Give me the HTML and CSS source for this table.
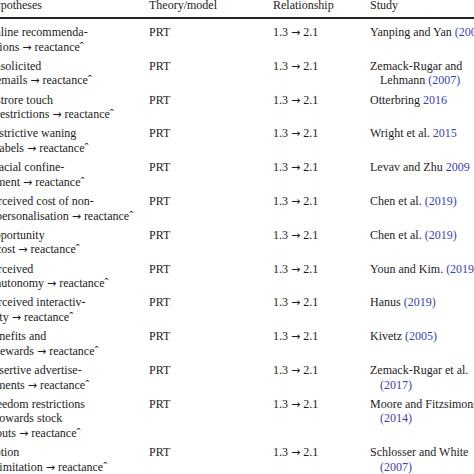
FILE: index.html
```html
<!DOCTYPE html>
<html lang="en">
<head>
<meta charset="utf-8">
<title>Hypotheses table</title>
<link rel="stylesheet" href="styles.css">
</head>
<body>
<div class="frame">
<table class="tbl">
<colgroup>
<col class="c1"><col class="c2"><col class="c3"><col class="c4">
</colgroup>
<thead>
<tr><th>Hypotheses</th><th>Theory/model</th><th>Relationship</th><th>Study</th></tr>
</thead>
<tbody>
<tr><td><span class="ln">Online recommenda-</span><span class="ln">tions <span class="ar">→</span> reactanceˆ</span></td><td>PRT</td><td>1.3 <span class="ar">→</span> 2.1</td><td><span class="ln">Yanping and Yan <span class="ref">(2009)</span></span></td></tr>
<tr><td><span class="ln">Unsolicited</span><span class="ln">emails <span class="ar">→</span> reactanceˆ</span></td><td>PRT</td><td>1.3 <span class="ar">→</span> 2.1</td><td><span class="ln">Zemack-Rugar and</span><span class="ln">Lehmann <span class="ref">(2007)</span></span></td></tr>
<tr><td><span class="ln">Instrore touch</span><span class="ln">restrictions <span class="ar">→</span> reactanceˆ</span></td><td>PRT</td><td>1.3 <span class="ar">→</span> 2.1</td><td><span class="ln">Otterbring <span class="ref">2016</span></span></td></tr>
<tr><td><span class="ln">Restrictive waning</span><span class="ln">labels <span class="ar">→</span> reactanceˆ</span></td><td>PRT</td><td>1.3 <span class="ar">→</span> 2.1</td><td><span class="ln">Wright et al. <span class="ref">2015</span></span></td></tr>
<tr><td><span class="ln">Spacial confine-</span><span class="ln">ment <span class="ar">→</span> reactanceˆ</span></td><td>PRT</td><td>1.3 <span class="ar">→</span> 2.1</td><td><span class="ln">Levav and Zhu <span class="ref">2009</span></span></td></tr>
<tr><td><span class="ln">Perceived cost of non-</span><span class="ln">personalisation <span class="ar">→</span> reactanceˆ</span></td><td>PRT</td><td>1.3 <span class="ar">→</span> 2.1</td><td><span class="ln">Chen et al. <span class="ref">(2019)</span></span></td></tr>
<tr><td><span class="ln">Opportunity</span><span class="ln">cost <span class="ar">→</span> reactanceˆ</span></td><td>PRT</td><td>1.3 <span class="ar">→</span> 2.1</td><td><span class="ln">Chen et al. <span class="ref">(2019)</span></span></td></tr>
<tr><td><span class="ln">Perceived</span><span class="ln">autonomy <span class="ar">→</span> reactanceˆ</span></td><td>PRT</td><td>1.3 <span class="ar">→</span> 2.1</td><td><span class="ln">Youn and Kim. <span class="ref">(2019)</span></span></td></tr>
<tr><td><span class="ln">Perceived interactiv-</span><span class="ln">ity <span class="ar">→</span> reactanceˆ</span></td><td>PRT</td><td>1.3 <span class="ar">→</span> 2.1</td><td><span class="ln">Hanus <span class="ref">(2019)</span></span></td></tr>
<tr><td><span class="ln">Benefits and</span><span class="ln">rewards <span class="ar">→</span> reactanceˆ</span></td><td>PRT</td><td>1.3 <span class="ar">→</span> 2.1</td><td><span class="ln">Kivetz <span class="ref">(2005)</span></span></td></tr>
<tr><td><span class="ln">Assertive advertise-</span><span class="ln">ments <span class="ar">→</span> reactanceˆ</span></td><td>PRT</td><td>1.3 <span class="ar">→</span> 2.1</td><td><span class="ln">Zemack-Rugar et al.</span><span class="ln"><span class="ref">(2017)</span></span></td></tr>
<tr><td><span class="ln">Freedom restrictions</span><span class="ln">towards stock</span><span class="ln">outs <span class="ar">→</span> reactanceˆ</span></td><td>PRT</td><td>1.3 <span class="ar">→</span> 2.1</td><td><span class="ln">Moore and Fitzsimons</span><span class="ln"><span class="ref">(2014)</span></span></td></tr>
<tr><td><span class="ln">Option</span><span class="ln">limitation <span class="ar">→</span> reactanceˆ</span></td><td>PRT</td><td>1.3 <span class="ar">→</span> 2.1</td><td><span class="ln">Schlosser and White</span><span class="ln"><span class="ref">(2007)</span></span></td></tr>
</tbody>
</table>
</div>
</body>
</html>
```

FILE: styles.css
```css
html, body {
  margin: 0;
  padding: 0;
  background: #ffffff;
}

.frame {
  width: 474px;
  height: 474px;
  overflow: hidden;
}

.tbl {
  border-collapse: separate;
  border-spacing: 0;
  table-layout: fixed;
  width: 544px;
  margin-top: -2.5px;
  margin-left: -14px;
  font-family: "Liberation Serif", "Times New Roman", serif;
  font-size: 12px;
  line-height: 14.6px;
  color: #1c1c1c;
}

.c1 { width: 163px; }
.c2 { width: 124px; }
.c3 { width: 97px; }
.c4 { width: 160px; }

.tbl th {
  text-align: left;
  font-weight: normal;
  vertical-align: top;
  padding: 0 0 5px 0;
  border-bottom: 2px solid #222222;
  white-space: nowrap;
}

.tbl td {
  vertical-align: top;
  padding: 2.3px 0;
  white-space: nowrap;
}

.tbl tbody tr:first-child td {
  padding-top: 6px;
}

.ln {
  display: block;
}

.ln + .ln {
  padding-left: 10px;
}

.ar {
  font-family: "DejaVu Sans", sans-serif;
  font-size: 11px;
  line-height: 1;
}

.ref {
  color: #3b3fb0;
}
```
